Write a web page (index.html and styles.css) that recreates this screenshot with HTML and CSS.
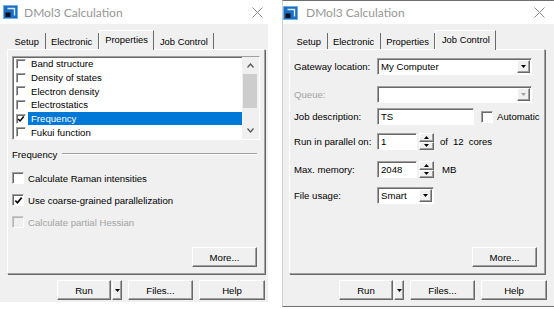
FILE: index.html
```html
<!DOCTYPE html>
<html>
<head>
<meta charset="utf-8">
<link rel="stylesheet" href="styles.css">
</head>
<body>
<div class="desktop">
  <!-- Left window: Properties tab -->
  <div class="window win-a">
    <div class="titlebar">
      <svg class="app-icon" width="15" height="14" viewBox="0 0 15 14"><rect x="0.5" y="0.5" width="14" height="13" fill="#1c6cc0" stroke="#6fb2ea"/><path d="M4.5 3.5H11.5V10.5" stroke="#d9ecfb" stroke-width="1.4" fill="none"/><rect x="2.5" y="7.5" width="5" height="4.5" fill="#0a0f1a"/></svg>
      <span class="title">DMol3 Calculation</span>
      <svg class="close" width="11" height="11" viewBox="0 0 11 11"><path d="M0.5 0.5L10.5 10.5M10.5 0.5L0.5 10.5" stroke="#8a8a8a" stroke-width="1"/></svg>
    </div>
    <div class="client">
      <div class="tabs">
        <div class="tab">Setup</div>
        <div class="tab">Electronic</div>
        <div class="tab active">Properties</div>
        <div class="tab">Job Control</div>
      </div>
      <div class="panel">
        <div class="listbox sunken">
          <div class="items">
            <div class="item"><span class="cb cb-small sunken"></span><span class="item-label">Band structure</span></div>
            <div class="item"><span class="cb cb-small sunken"></span><span class="item-label">Density of states</span></div>
            <div class="item"><span class="cb cb-small sunken"></span><span class="item-label">Electron density</span></div>
            <div class="item"><span class="cb cb-small sunken"></span><span class="item-label">Electrostatics</span></div>
            <div class="item"><span class="cb cb-small sunken"><svg viewBox="0 0 10 10" width="8" height="8"><path d="M1.5 5l2.3 2.5L8.5 1.8" stroke="#000" stroke-width="1.8" fill="none"/></svg></span><span class="item-label sel">Frequency</span></div>
            <div class="item"><span class="cb cb-small sunken"></span><span class="item-label">Fukui function</span></div>
          </div>
          <div class="scrollbar">
            <div class="sb-arrow"><svg width="7" height="5" viewBox="0 0 7 5"><path d="M0.5 4.5L3.5 1L6.5 4.5" stroke="#555" stroke-width="1.2" fill="none"/></svg></div>
            <div class="sb-thumb"></div>
            <div class="sb-track"></div>
            <div class="sb-arrow"><svg width="7" height="5" viewBox="0 0 7 5"><path d="M0.5 0.5L3.5 4L6.5 0.5" stroke="#555" stroke-width="1.2" fill="none"/></svg></div>
          </div>
        </div>
        <div class="group-head"><span>Frequency</span><span class="group-line"></span></div>
        <div class="options">
          <div class="opt"><span class="cb sunken"></span><span>Calculate Raman intensities</span></div>
          <div class="opt"><span class="cb sunken"><svg viewBox="0 0 10 10" width="9" height="9"><path d="M1.5 5l2.3 2.5L8.5 1.8" stroke="#000" stroke-width="1.8" fill="none"/></svg></span><span>Use coarse-grained parallelization</span></div>
          <div class="opt disabled"><span class="cb sunken cb-disabled"></span><span>Calculate partial Hessian</span></div>
        </div>
        <div class="btn raised more">More...</div>
      </div>
      <div class="buttons">
        <div class="split">
          <div class="btn raised btn-run">Run</div>
          <div class="btn raised btn-dd"><svg width="5" height="3" viewBox="0 0 5 3"><path d="M0 0H5L2.5 3Z" fill="#000"/></svg></div>
        </div>
        <div class="btn raised btn-files">Files...</div>
        <div class="btn raised btn-help">Help</div>
      </div>
    </div>
  </div>

  <!-- Right window: Job Control tab -->
  <div class="window win-b">
    <div class="titlebar">
      <svg class="app-icon" width="15" height="14" viewBox="0 0 15 14"><rect x="0.5" y="0.5" width="14" height="13" fill="#1c6cc0" stroke="#6fb2ea"/><path d="M4.5 3.5H11.5V10.5" stroke="#d9ecfb" stroke-width="1.4" fill="none"/><rect x="2.5" y="7.5" width="5" height="4.5" fill="#0a0f1a"/></svg>
      <span class="title">DMol3 Calculation</span>
      <svg class="close" width="11" height="11" viewBox="0 0 11 11"><path d="M0.5 0.5L10.5 10.5M10.5 0.5L0.5 10.5" stroke="#8a8a8a" stroke-width="1"/></svg>
    </div>
    <div class="client">
      <div class="tabs">
        <div class="tab">Setup</div>
        <div class="tab">Electronic</div>
        <div class="tab">Properties</div>
        <div class="tab active">Job Control</div>
      </div>
      <div class="panel">
        <div class="form">
          <span class="lbl">Gateway location:</span>
          <div class="combo sunken combo-wide"><span>My Computer</span><span class="combo-btn raised"><svg width="5" height="3" viewBox="0 0 5 3"><path d="M0 0H5L2.5 3Z" fill="#000"/></svg></span></div>

          <span class="lbl disabled">Queue:</span>
          <div class="combo sunken combo-wide"><span></span><span class="combo-btn raised"><svg width="5" height="3" viewBox="0 0 5 3"><path d="M0 0H5L2.5 3Z" fill="#a0a0a0"/></svg></span></div>

          <span class="lbl">Job description:</span>
          <div class="ctl-row">
            <div class="textbox sunken tb-job">TS</div>
            <span class="cb sunken cb-auto"></span><span>Automatic</span>
          </div>

          <span class="lbl">Run in parallel on:</span>
          <div class="ctl-row">
            <div class="textbox sunken tb-num">1</div>
            <div class="spin"><span class="spin-btn raised"><svg width="5" height="3" viewBox="0 0 5 3"><path d="M0 3H5L2.5 0Z" fill="#000"/></svg></span><span class="spin-btn raised"><svg width="5" height="3" viewBox="0 0 5 3"><path d="M0 0H5L2.5 3Z" fill="#000"/></svg></span></div>
            <span class="cores"><span>of</span><span>12</span><span>cores</span></span>
          </div>

          <span class="lbl">Max. memory:</span>
          <div class="ctl-row">
            <div class="textbox sunken tb-num">2048</div>
            <div class="spin"><span class="spin-btn raised"><svg width="5" height="3" viewBox="0 0 5 3"><path d="M0 3H5L2.5 0Z" fill="#000"/></svg></span><span class="spin-btn raised"><svg width="5" height="3" viewBox="0 0 5 3"><path d="M0 0H5L2.5 3Z" fill="#000"/></svg></span></div>
            <span class="unit">MB</span>
          </div>

          <span class="lbl">File usage:</span>
          <div class="combo sunken combo-small"><span>Smart</span><span class="combo-btn raised"><svg width="5" height="3" viewBox="0 0 5 3"><path d="M0 0H5L2.5 3Z" fill="#000"/></svg></span></div>
        </div>
        <div class="btn raised more">More...</div>
      </div>
      <div class="buttons">
        <div class="split">
          <div class="btn raised btn-run">Run</div>
          <div class="btn raised btn-dd"><svg width="5" height="3" viewBox="0 0 5 3"><path d="M0 0H5L2.5 3Z" fill="#000"/></svg></div>
        </div>
        <div class="btn raised btn-files">Files...</div>
        <div class="btn raised btn-help">Help</div>
      </div>
    </div>
  </div>
</div>
</body>
</html>
```
FILE: styles.css
```css
* { box-sizing: border-box; }

body {
  margin: 0;
  background: #ffffff;
  font-family: "Liberation Sans", Arial, sans-serif;
  font-size: 9.6px;
  color: #000;
}

.desktop {
  display: flex;
  gap: 14px;
  width: 554px;
  height: 309px;
  overflow: hidden;
}

.window {
  display: flex;
  flex-direction: column;
  background: #f0f0f0;
}

.win-a { width: 268px; height: 302px; }

.win-b {
  width: 272px;
  height: 307px;
  border-top: 1px solid #707070;
  border-left: 1px solid #cfcfcf;
  border-bottom: 1px solid #707070;
}

/* title bar */
.titlebar {
  height: 24px;
  flex: none;
  background: #ffffff;
  display: flex;
  align-items: center;
  padding-left: 3px;
}
.win-b .titlebar { height: 23px; padding-left: 0; }

.app-icon { flex: none; }

.title {
  margin-left: 6px;
  font-family: Lato, "Liberation Sans", sans-serif;
  font-size: 12px;
  color: #969696;
}
.win-b .title { margin-left: 8px; }

.close { margin-left: auto; margin-right: 5px; }
.win-b .close { margin-right: 9px; }

/* client */
.client {
  flex: 1;
  display: flex;
  flex-direction: column;
  padding: 6px 3px 0 7px;
}
.win-b .client { padding: 6px 9px 0 6px; }

/* tabs */
.tabs {
  display: flex;
  align-items: flex-end;
  height: 19px;
  padding-left: 2px;
}
.tab {
  height: 16px;
  padding: 0 5.5px;
  display: flex;
  align-items: center;
  border-right: 1px solid #6a6a6a;
  font-size: 9.4px;
}
.tab.active {
  height: 20px;
  margin-bottom: -1px;
  padding-bottom: 2px;
  border-left: 1px solid #ffffff;
  border-top: 1px solid #ffffff;
  background: #f0f0f0;
  position: relative;
  z-index: 1;
}

/* panel */
.panel {
  height: 225px;
  border: 1px solid;
  border-color: #ffffff #a0a0a0 #a0a0a0 #ffffff;
  box-shadow: 1px 1px 0 #696969;
  display: flex;
  flex-direction: column;
  padding: 6px 4px 6px 4px;
}

/* 3D looks */
.raised {
  background: #f0f0f0;
  border: 1px solid;
  border-color: #ffffff #696969 #696969 #ffffff;
  box-shadow: inset -1px -1px 0 #a0a0a0;
}
.sunken {
  background: #ffffff;
  border: 1px solid;
  border-color: #a0a0a0 #ffffff #ffffff #a0a0a0;
  box-shadow: inset 1px 1px 0 #696969;
}

/* listbox */
.listbox {
  height: 84px;
  display: flex;
}
.items {
  flex: 1;
  display: flex;
  flex-direction: column;
}
.item {
  height: 13.7px;
  display: flex;
  align-items: center;
  padding-left: 3px;
}
.item-label {
  flex: 1;
  height: 12.5px;
  padding-left: 3px;
  display: flex;
  align-items: center;
}
.item-label.sel { background: #0078d7; color: #ffffff; }

.cb {
  flex: none;
  width: 12px;
  height: 12px;
  display: flex;
  align-items: center;
  justify-content: center;
}
.cb-small { width: 10px; height: 10px; margin-right: 2px; }
.cb-disabled { background: #f0f0f0; border-color: #c8c8c8 #ffffff #ffffff #c8c8c8; box-shadow: inset 1px 1px 0 #b4b4b4; }

.scrollbar {
  width: 17px;
  flex: none;
  background: #f0f0f0;
  display: flex;
  flex-direction: column;
  align-items: center;
  padding: 1px 1px 1px 0;
}
.sb-arrow {
  height: 15px;
  width: 100%;
  display: flex;
  align-items: center;
  justify-content: center;
  flex: none;
}
.sb-thumb {
  width: 14px;
  height: 34px;
  margin-top: 1px;
  background: #cdcdcd;
  flex: none;
}
.sb-track { flex: 1; }

/* group header */
.group-head {
  display: flex;
  align-items: center;
  gap: 5px;
  margin-top: 8px;
  height: 12px;
}
.group-line {
  flex: 1;
  height: 2px;
  border-top: 1px solid #a0a0a0;
  border-bottom: 1px solid #ffffff;
  margin-right: 3px;
}

.options {
  display: flex;
  flex-direction: column;
  gap: 8px;
  margin-top: 11px;
}
.opt {
  height: 14px;
  display: flex;
  align-items: center;
  gap: 4px;
}
.disabled { color: #a3a3a3; }

/* buttons */
.btn {
  height: 20px;
  display: flex;
  align-items: center;
  justify-content: center;
  flex: none;
}
.more {
  width: 65px;
  margin-top: auto;
  align-self: flex-end;
  margin-right: 3px;
}
.buttons {
  display: flex;
  justify-content: flex-end;
  gap: 6px;
  margin-top: 6px;
}
.win-b .buttons { margin-right: -2px; }
.split { display: flex; gap: 1px; }
.btn-run { width: 54px; }
.btn-dd { width: 10px; }
.btn-files { width: 65px; }
.btn-help { width: 66px; }

/* job control form */
.form {
  display: grid;
  grid-template-columns: 83px 1fr;
  grid-template-rows: 28px 22px 25px 28px 26px 17px;
  align-items: start;
  margin-top: 2px;
}
.lbl { line-height: 17px; }

.combo {
  height: 17px;
  display: flex;
  align-items: center;
  padding-left: 3px;
}
.combo-wide { width: 155px; }
.combo-small { width: 57px; }
.combo-btn {
  margin-left: auto;
  margin-right: 1px;
  width: 13px;
  height: 13px;
  display: flex;
  align-items: center;
  justify-content: center;
}

.ctl-row {
  display: flex;
  align-items: center;
  height: 17px;
}
.textbox {
  height: 17px;
  display: flex;
  align-items: center;
  padding-left: 3px;
}
.tb-job { width: 97px; }
.tb-num { width: 40px; }
.cb-auto { margin-left: 7px; margin-right: 4px; }

.spin {
  width: 15px;
  height: 17px;
  margin-left: 2px;
  display: flex;
  flex-direction: column;
}
.spin-btn {
  flex: 1;
  display: flex;
  align-items: center;
  justify-content: center;
}
.cores { display: flex; gap: 5px; margin-left: 6px; }
.unit { margin-left: 8px; }
```
